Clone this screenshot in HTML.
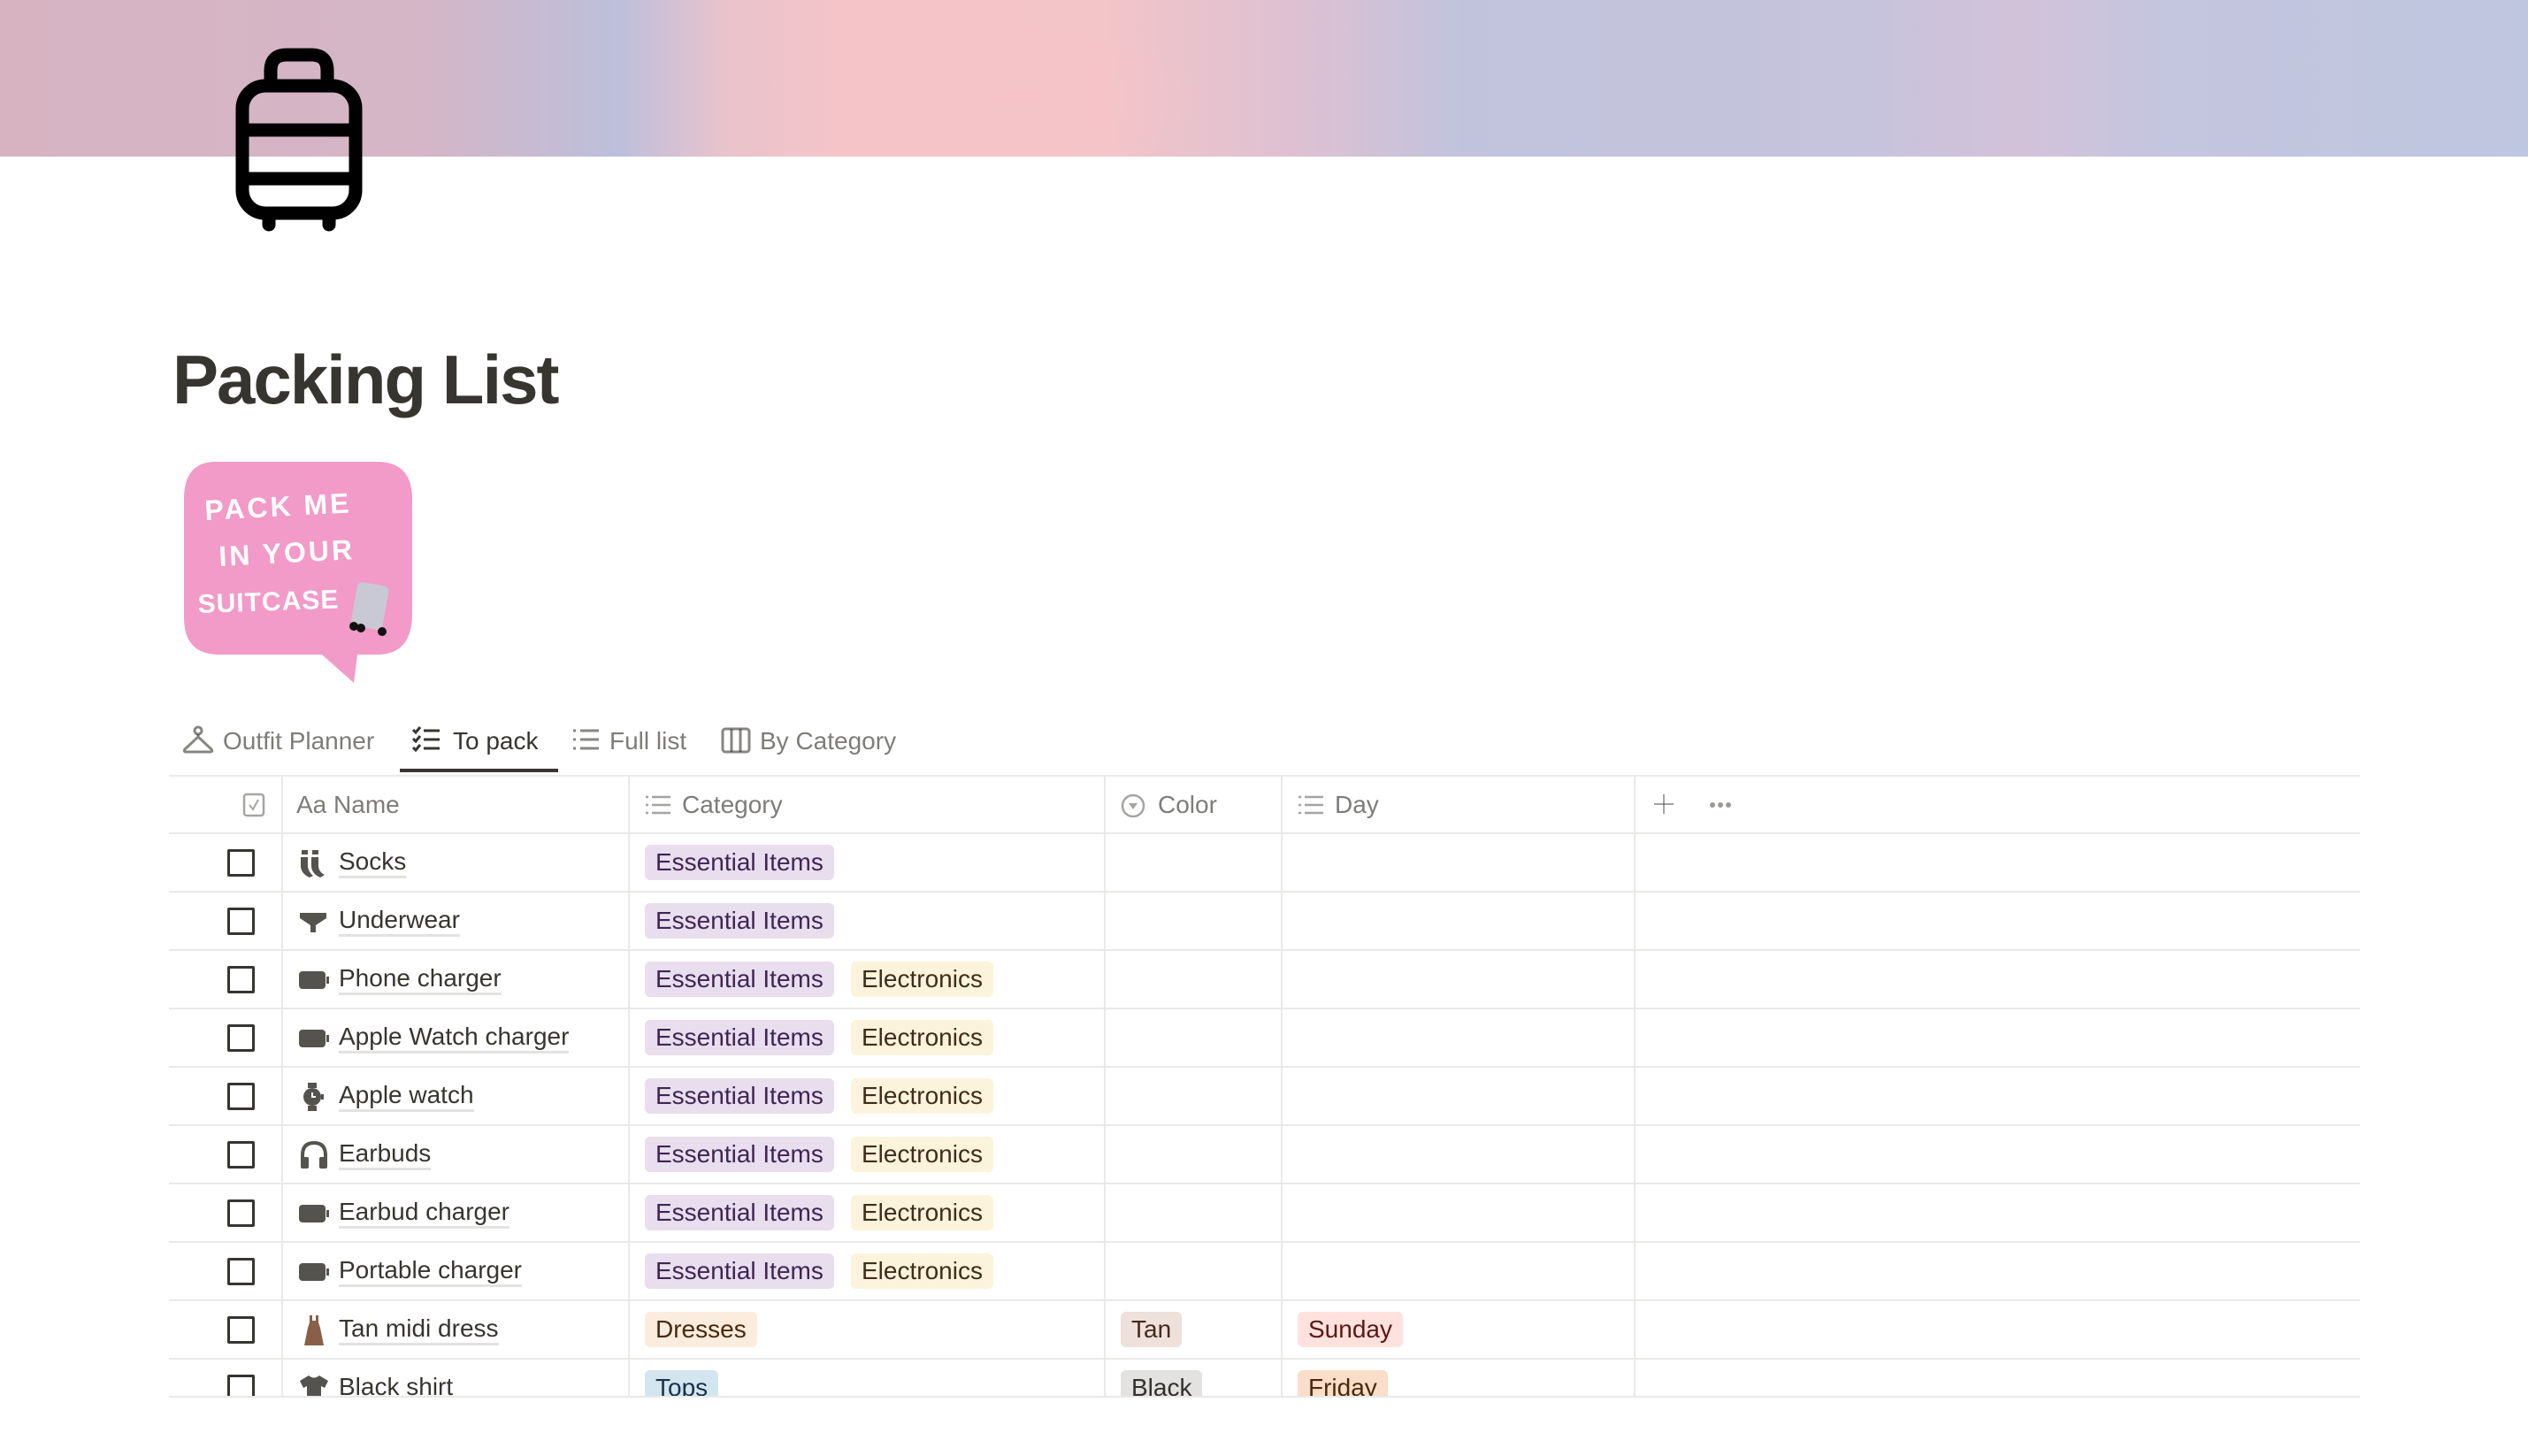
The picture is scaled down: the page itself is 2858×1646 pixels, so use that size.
<!DOCTYPE html>
<html><head><meta charset="utf-8"><style>
*{margin:0;padding:0;box-sizing:border-box}
body{width:2858px;height:1646px;background:#fff;position:relative;overflow:hidden;font-family:"Liberation Sans",sans-serif;color:#37352F}
.cover{position:absolute;left:0;top:0;width:2858px;height:177px;
background:
radial-gradient(ellipse 300px 120px at 1150px 110px,rgba(246,196,200,.7),rgba(246,196,200,0) 70%),
linear-gradient(90deg,#d7b3c2 0px,#d4b6c6 480px,#bdbfdb 700px,#e9c3cc 820px,#f4c4c8 950px,#f3c4c8 1250px,#dcc0d3 1480px,#c1c3dd 1650px,#c6c3dc 2100px,#d2c2d9 2280px,#c4c5df 2450px,#bfc6df 2858px);}
.abs{position:absolute}
.title{left:195px;top:384px;font-size:78px;font-weight:700;letter-spacing:-2px;color:#37352F}
.tab{position:absolute;top:820px;font-size:28px;color:rgba(55,53,47,.65);height:36px;line-height:36px}
.tab.on{color:#37352F}
.line{position:absolute;background:#e9e9e7}
.hd{position:absolute;top:877px;height:65px;line-height:65px;font-size:28px;color:rgba(55,53,47,.65)}
.cb{position:absolute;left:257px;width:31px;height:31px;border:3.5px solid #37352F;border-radius:2px}
.nm{position:absolute;left:383px;font-size:28px;color:#37352F;border-bottom:3px solid #e3e2e0;line-height:32px}
.ic{position:absolute;left:337px}
.tag{position:absolute;height:40px;line-height:40px;padding:0 12px;font-size:28px;border-radius:6px;white-space:nowrap}
.pu{background:#E8DEEE;color:#412454}
.ye{background:#FBF3DB;color:#402C1B}
.or{background:#FBECDD;color:#49290E}
.bl{background:#D3E5EF;color:#183347}
.br{background:#EEE0DA;color:#442A1E}
.gr{background:#E3E2E0;color:#32302C}
.re{background:#FFE2DD;color:#5D1715}
.or2{background:#FADEC9;color:#49290E}
</style></head><body>
<div class="cover"></div>
<svg class="abs" style="left:262px;top:52px" width="152" height="212" viewBox="0 0 152 212">
<g fill="none" stroke="#000" stroke-width="15" stroke-linecap="round" stroke-linejoin="round">
<path d="M44 45 V28 Q44 10 62 10 H90 Q108 10 108 28 V45"/>
<rect x="12" y="45" width="128" height="144" rx="26"/>
<line x1="12" y1="95" x2="140" y2="95"/>
<line x1="12" y1="150" x2="140" y2="150"/>
<line x1="42" y1="192" x2="42" y2="202"/>
<line x1="110" y1="192" x2="110" y2="202"/>
</g></svg>
<div class="abs title">Packing List</div>
<svg class="abs" style="left:204px;top:518px" width="266" height="256" viewBox="0 0 266 256">
<path d="M40 4 H222 Q262 4 262 46 V176 Q262 222 222 222 H200 L196 254 L160 222 H44 Q4 222 4 180 V46 Q4 4 40 4 Z" fill="#F29AC8"/>
<g fill="#fff" font-family="Liberation Sans,sans-serif" font-weight="700" font-size="32" letter-spacing="3">
<text x="28" y="70" transform="rotate(-3 28 70)">PACK ME</text>
<text x="44" y="122" transform="rotate(-3 44 122)">IN YOUR</text>
<text x="20" y="175" transform="rotate(-2 20 175)" font-size="30" letter-spacing="1">SUITCASE</text>
</g>
<rect x="196" y="142" width="36" height="50" rx="6" fill="#c9c9d6" transform="rotate(10 214 168)"/>
<circle cx="196" cy="190" r="5" fill="#111"/><circle cx="204" cy="192" r="5" fill="#111"/><circle cx="228" cy="196" r="5" fill="#111"/>
</svg>

<!-- tabs -->
<svg class="abs" style="left:206px;top:820px" width="36" height="34" viewBox="0 0 36 34"><g fill="none" stroke="rgba(55,53,47,.6)" stroke-width="3"><circle cx="18" cy="6" r="4"/><path d="M18 10 V13 L3 27 Q1 30 5 30 H31 Q35 30 33 27 L18 13"/></g></svg>
<div class="tab" style="left:252px">Outfit Planner</div>
<svg class="abs" style="left:465px;top:820px" width="34" height="32" viewBox="0 0 34 32"><g fill="none" stroke="#37352F" stroke-width="3"><path d="M2 5 L5 8 L10 2"/><path d="M2 15 L5 18 L10 12"/><path d="M2 25 L5 28 L10 22"/><line x1="14" y1="6" x2="32" y2="6"/><line x1="14" y1="16" x2="32" y2="16"/><line x1="14" y1="26" x2="32" y2="26"/></g></svg>
<div class="tab on" style="left:512px">To pack</div>
<div class="abs" style="left:452px;top:869px;width:179px;height:4px;background:#37352F"></div>
<svg class="abs" style="left:647px;top:822px" width="32" height="30" viewBox="0 0 32 30"><g fill="none" stroke="rgba(55,53,47,.6)" stroke-width="3"><line x1="1" y1="4" x2="4" y2="4"/><line x1="1" y1="14" x2="4" y2="14"/><line x1="1" y1="24" x2="4" y2="24"/><line x1="9" y1="4" x2="30" y2="4"/><line x1="9" y1="14" x2="30" y2="14"/><line x1="9" y1="24" x2="30" y2="24"/></g></svg>
<div class="tab" style="left:689px">Full list</div>
<svg class="abs" style="left:815px;top:822px" width="34" height="30" viewBox="0 0 34 30"><g fill="none" stroke="rgba(55,53,47,.6)" stroke-width="3"><rect x="2" y="2" width="30" height="26" rx="3"/><line x1="12" y1="2" x2="12" y2="28"/><line x1="22" y1="2" x2="22" y2="28"/></g></svg>
<div class="tab" style="left:859px">By Category</div>

<!-- table -->
<div class="line" style="left:191px;top:876px;width:2477px;height:2px"></div>
<div class="line" style="left:191px;top:941px;width:2477px;height:2px"></div>
<div class="line" style="left:191px;top:1578px;width:2477px;height:2px"></div>
<div class="line" style="left:318px;top:877px;width:2px;height:701px"></div>
<div class="line" style="left:710px;top:877px;width:2px;height:701px"></div>
<div class="line" style="left:1248px;top:877px;width:2px;height:701px"></div>
<div class="line" style="left:1448px;top:877px;width:2px;height:701px"></div>
<div class="line" style="left:1847px;top:877px;width:2px;height:701px"></div>

<svg class="abs" style="left:274px;top:896px" width="26" height="28" viewBox="0 0 26 28"><rect x="2" y="2" width="22" height="24" rx="3" fill="none" stroke="rgba(55,53,47,.45)" stroke-width="2.5"/><path d="M8 14 L12 19 L18 8" fill="none" stroke="rgba(55,53,47,.45)" stroke-width="2"/></svg>
<div class="hd" style="left:335px">Aa Name</div>
<svg class="abs" style="left:729px;top:898px" width="30" height="24" viewBox="0 0 30 24"><g stroke="rgba(55,53,47,.45)" stroke-width="2.5"><line x1="1" y1="3" x2="4" y2="3"/><line x1="1" y1="12" x2="4" y2="12"/><line x1="1" y1="21" x2="4" y2="21"/><line x1="8" y1="3" x2="29" y2="3"/><line x1="8" y1="12" x2="29" y2="12"/><line x1="8" y1="21" x2="29" y2="21"/></g></svg>
<div class="hd" style="left:771px">Category</div>
<svg class="abs" style="left:1266px;top:896px" width="30" height="30" viewBox="0 0 30 30"><circle cx="15" cy="15" r="12" fill="none" stroke="rgba(55,53,47,.45)" stroke-width="2.5"/><path d="M10 12 H20 L15 19 Z" fill="rgba(55,53,47,.45)"/></svg>
<div class="hd" style="left:1309px">Color</div>
<svg class="abs" style="left:1467px;top:898px" width="30" height="24" viewBox="0 0 30 24"><g stroke="rgba(55,53,47,.45)" stroke-width="2.5"><line x1="1" y1="3" x2="4" y2="3"/><line x1="1" y1="12" x2="4" y2="12"/><line x1="1" y1="21" x2="4" y2="21"/><line x1="8" y1="3" x2="29" y2="3"/><line x1="8" y1="12" x2="29" y2="12"/><line x1="8" y1="21" x2="29" y2="21"/></g></svg>
<div class="hd" style="left:1509px">Day</div>
<svg class="abs" style="left:1869px;top:897px" width="24" height="24" viewBox="0 0 24 24"><g stroke="rgba(55,53,47,.45)" stroke-width="2"><line x1="12" y1="1" x2="12" y2="23"/><line x1="1" y1="12" x2="23" y2="12"/></g></svg>
<svg class="abs" style="left:1932px;top:906px" width="26" height="8" viewBox="0 0 26 8"><g fill="rgba(55,53,47,.5)"><circle cx="4" cy="4" r="3"/><circle cx="13" cy="4" r="3"/><circle cx="22" cy="4" r="3"/></g></svg>

<div class="abs" style="left:191px;top:943px;width:2477px;height:635px;overflow:hidden">
<div style="position:relative;left:-191px;top:-943px">
<div class="line" style="left:191px;top:1007px;width:2477px;height:2px"></div>
<div class="line" style="left:191px;top:1073px;width:2477px;height:2px"></div>
<div class="line" style="left:191px;top:1139px;width:2477px;height:2px"></div>
<div class="line" style="left:191px;top:1205px;width:2477px;height:2px"></div>
<div class="line" style="left:191px;top:1271px;width:2477px;height:2px"></div>
<div class="line" style="left:191px;top:1337px;width:2477px;height:2px"></div>
<div class="line" style="left:191px;top:1403px;width:2477px;height:2px"></div>
<div class="line" style="left:191px;top:1469px;width:2477px;height:2px"></div>
<div class="line" style="left:191px;top:1535px;width:2477px;height:2px"></div>

<div class="cb" style="top:960px"></div>
<svg class="ic" style="top:960px" width="34" height="32" viewBox="0 0 34 32"><g fill="#55534E"><rect x="4" y="1" width="7" height="5"/><rect x="16" y="1" width="7" height="5"/><path d="M3 9 H11 V20 Q12 26 17 30 L13 32 Q4 28 3 20 Z"/><path d="M15 9 H23 V20 Q24 26 30 29 L25 32 Q16 28 15 20 Z"/></g></svg>
<div class="nm" style="top:958px">Socks</div>
<div class="tag pu" style="left:729px;top:955px">Essential Items</div>

<div class="cb" style="top:1026px"></div>
<svg class="ic" style="top:1026px" width="34" height="32" viewBox="0 0 34 32"><path d="M2 6 H32 V12 L20 20 V28 H14 V20 L2 12 Z" fill="#55534E"/></svg>
<div class="nm" style="top:1024px">Underwear</div>
<div class="tag pu" style="left:729px;top:1021px">Essential Items</div>

<div class="cb" style="top:1092px"></div>
<svg class="ic" style="top:1094px" width="36" height="28" viewBox="0 0 36 28"><rect x="1" y="4" width="30" height="20" rx="4" fill="#55534E"/><rect x="32" y="10" width="3" height="8" fill="#55534E"/></svg>
<div class="nm" style="top:1090px">Phone charger</div>
<div class="tag pu" style="left:729px;top:1087px">Essential Items</div>
<div class="tag ye" style="left:962px;top:1087px">Electronics</div>

<div class="cb" style="top:1158px"></div>
<svg class="ic" style="top:1160px" width="36" height="28" viewBox="0 0 36 28"><rect x="1" y="4" width="30" height="20" rx="4" fill="#55534E"/><rect x="32" y="10" width="3" height="8" fill="#55534E"/></svg>
<div class="nm" style="top:1156px">Apple Watch charger</div>
<div class="tag pu" style="left:729px;top:1153px">Essential Items</div>
<div class="tag ye" style="left:962px;top:1153px">Electronics</div>

<div class="cb" style="top:1224px"></div>
<svg class="ic" style="top:1222px" width="36" height="36" viewBox="0 0 36 36"><g fill="#55534E"><rect x="11" y="2" width="10" height="6"/><rect x="11" y="28" width="10" height="6"/><circle cx="16" cy="18" r="10"/><rect x="26" y="15" width="3" height="6"/></g><path d="M16 13 V18 H20" stroke="#fff" stroke-width="2" fill="none"/></svg>
<div class="nm" style="top:1222px">Apple watch</div>
<div class="tag pu" style="left:729px;top:1219px">Essential Items</div>
<div class="tag ye" style="left:962px;top:1219px">Electronics</div>

<div class="cb" style="top:1290px"></div>
<svg class="ic" style="top:1288px" width="36" height="36" viewBox="0 0 36 36"><path d="M5 26 V18 Q5 4 18 4 Q31 4 31 18 V26" fill="none" stroke="#55534E" stroke-width="4"/><rect x="3" y="20" width="9" height="13" rx="2" fill="#55534E"/><rect x="24" y="20" width="9" height="13" rx="2" fill="#55534E"/></svg>
<div class="nm" style="top:1288px">Earbuds</div>
<div class="tag pu" style="left:729px;top:1285px">Essential Items</div>
<div class="tag ye" style="left:962px;top:1285px">Electronics</div>

<div class="cb" style="top:1356px"></div>
<svg class="ic" style="top:1358px" width="36" height="28" viewBox="0 0 36 28"><rect x="1" y="4" width="30" height="20" rx="4" fill="#55534E"/><rect x="32" y="10" width="3" height="8" fill="#55534E"/></svg>
<div class="nm" style="top:1354px">Earbud charger</div>
<div class="tag pu" style="left:729px;top:1351px">Essential Items</div>
<div class="tag ye" style="left:962px;top:1351px">Electronics</div>

<div class="cb" style="top:1422px"></div>
<svg class="ic" style="top:1424px" width="36" height="28" viewBox="0 0 36 28"><rect x="1" y="4" width="30" height="20" rx="4" fill="#55534E"/><rect x="32" y="10" width="3" height="8" fill="#55534E"/></svg>
<div class="nm" style="top:1420px">Portable charger</div>
<div class="tag pu" style="left:729px;top:1417px">Essential Items</div>
<div class="tag ye" style="left:962px;top:1417px">Electronics</div>

<div class="cb" style="top:1488px"></div>
<svg class="ic" style="top:1485px" width="36" height="38" viewBox="0 0 36 38"><path d="M13 2 V10 L11 16 L7 36 H29 L25 16 L23 10 V2 H20 V8 H16 V2 Z" fill="#8B5E4A"/></svg>
<div class="nm" style="top:1486px">Tan midi dress</div>
<div class="tag or" style="left:729px;top:1483px">Dresses</div>
<div class="tag br" style="left:1267px;top:1483px">Tan</div>
<div class="tag re" style="left:1467px;top:1483px">Sunday</div>

<div class="cb" style="top:1554px"></div>
<svg class="ic" style="top:1553px" width="36" height="32" viewBox="0 0 36 32"><path d="M12 2 L2 8 L6 16 L10 14 V30 H26 V14 L30 16 L34 8 L24 2 Q18 7 12 2 Z" fill="#55534E"/></svg>
<div class="nm" style="top:1552px">Black shirt</div>
<div class="tag bl" style="left:729px;top:1549px">Tops</div>
<div class="tag gr" style="left:1267px;top:1549px">Black</div>
<div class="tag or2" style="left:1467px;top:1549px">Friday</div>
</div></div>
</body></html>
